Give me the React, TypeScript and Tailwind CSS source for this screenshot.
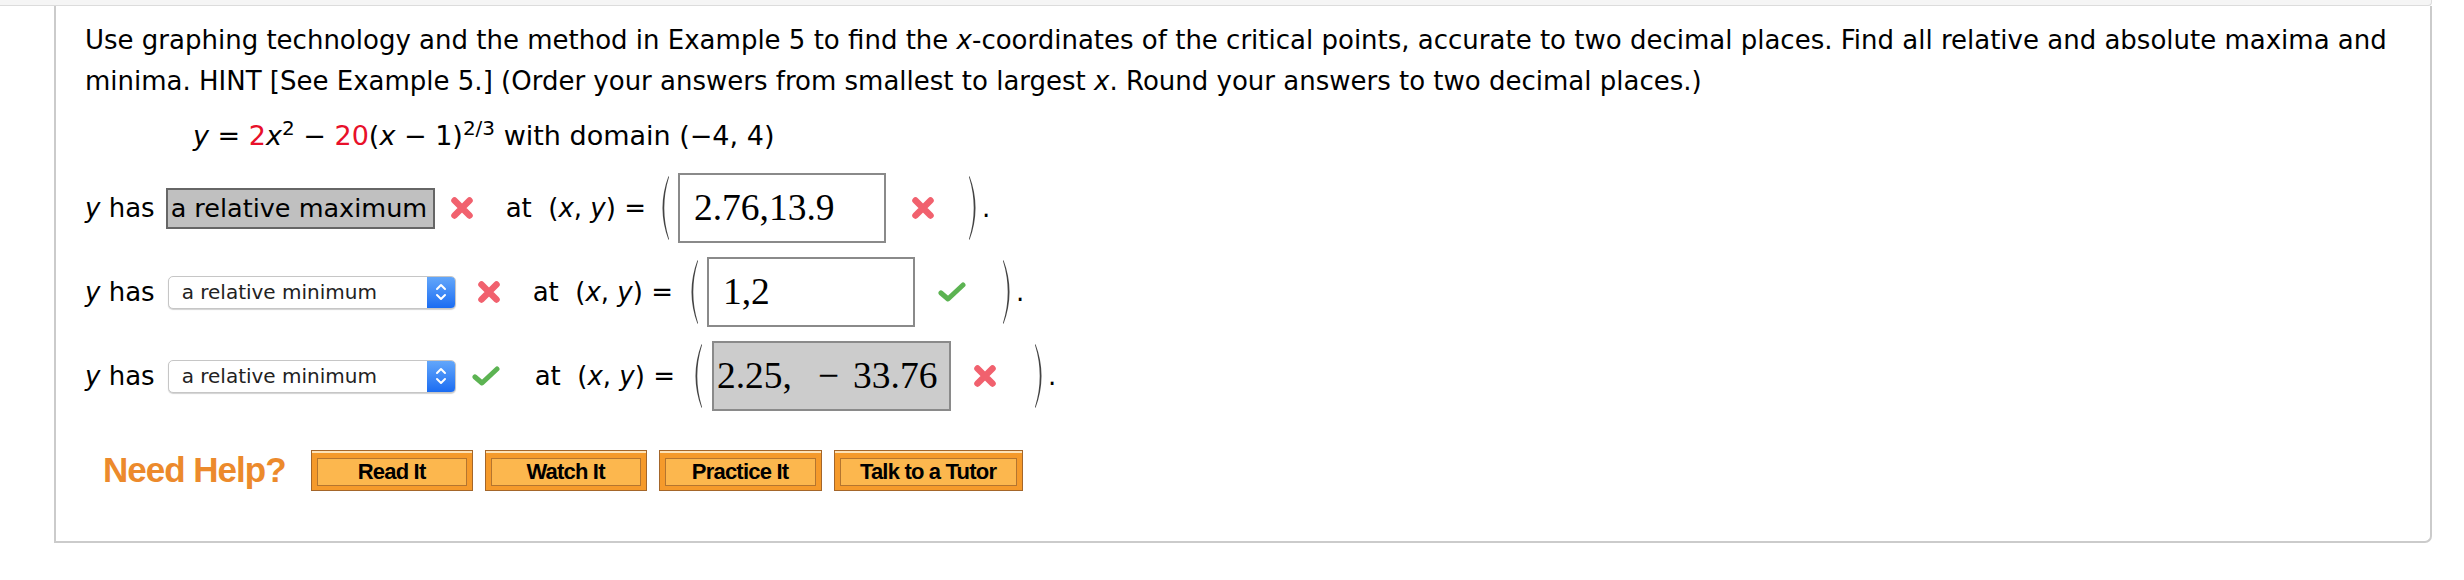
import React from "react";

const body = "font-['DejaVu_Sans',Verdana,sans-serif]";
const serif = "font-['Liberation_Serif','Times_New_Roman',serif]";

const Cross = ({ className = "" }: { className?: string }) => (
  <svg width="24" height="24" viewBox="0 0 24 24" className={`shrink-0 ${className}`}>
    <path d="M4.5 4.5 L19.5 19.5 M19.5 4.5 L4.5 19.5" stroke="#f0505f" strokeWidth="6.5" strokeLinecap="round" opacity="0.9" />
  </svg>
);

const Check = ({ className = "" }: { className?: string }) => (
  <svg width="28" height="20" viewBox="0 0 28 20" className={`shrink-0 ${className}`}>
    <path d="M3 11 L10 17 L25 3" fill="none" stroke="#5cb352" strokeWidth="5" strokeLinecap="round" strokeLinejoin="round" />
  </svg>
);

const Paren = ({ right, className = "" }: { right?: boolean; className?: string }) => (
  <svg width="14" height="66" viewBox="0 0 14 66" className={`shrink-0 ${className}`}>
    <g transform={right ? "translate(14,0) scale(-1,1)" : undefined}>
      <path d="M12.5 1 Q0.5 33 12.5 65 L13 64 Q3.5 33 13 2 Z" fill="#444" />
    </g>
  </svg>
);

const Select = () => (
  <div className="ml-[13px] w-[288px] h-[33px] flex rounded-[5px] border border-[#c6c6c6] bg-white shadow-[0_1px_1px_rgba(0,0,0,0.18)] overflow-hidden shrink-0">
    <div className={`flex-1 pl-[13px] flex items-center text-[20px] text-[#222] ${body}`}>a relative minimum</div>
    <div className="w-[28px] bg-linear-to-b from-[#62a6fa] to-[#1a6cf2] flex items-center justify-center">
      <svg width="14" height="22" viewBox="0 0 14 22">
        <path d="M3 8 L7 4 L11 8 M3 14 L7 18 L11 14" fill="none" stroke="white" strokeWidth="2" strokeLinecap="round" strokeLinejoin="round" />
      </svg>
    </div>
  </div>
);

const AtXY = ({ className = "" }: { className?: string }) => (
  <span className={`whitespace-pre ${className}`}>
    at  (<i>x</i>, <i>y</i>) =
  </span>
);

const Answer = ({ children, className = "", gray }: { children: React.ReactNode; className?: string; gray?: boolean }) => (
  <div
    className={`h-[70px] border-2 border-[#8a8a8a] flex items-center text-[37.5px] text-black shrink-0 ${serif} ${gray ? "bg-[#cccccc]" : "bg-white"} ${className}`}
  >
    {children}
  </div>
);

const HelpButton = ({ label, w }: { label: string; w: string }) => (
  <div className={`${w} h-[41px] border border-[#a4662a] bg-[#f59a2b] shadow-[inset_0_2px_0_#fde2b6] px-[5px] pt-[7px] pb-[4px] shrink-0`}>
    <div className="h-full border border-[#b4752f] bg-[#fcb74e] flex items-center justify-center text-[22px] font-bold text-black font-['Liberation_Sans',Arial,sans-serif] tracking-[-0.8px]">
      {label}
    </div>
  </div>
);

export default function App() {
  return (
    <div className={`w-[2464px] h-[580px] bg-white text-black ${body} text-[26px] overflow-hidden`}>
      <div className="w-[2432px] h-[6px] bg-[#f5f5f5] border-b border-r border-[#dcdcdc] rounded-br-[4px]" />
      <div className="ml-[54px] w-[2378px] h-[537px] border-2 border-t-0 border-[#cbcbcb] rounded-br-[7px] pl-[29px] pr-[4px] pt-[14px]">
        <p className="leading-[41px]">
          Use graphing technology and the method in Example 5 to find the <i>x</i>-coordinates of the critical points, accurate to two decimal places. Find all relative and absolute maxima and minima. HINT [See Example 5.] (Order your answers from smallest to largest <i>x</i>. Round your answers to two decimal places.)
        </p>

        <div className="mt-[14px] pl-[108px] leading-[40px] text-[27px]">
          <i>y</i> = <span className="text-[#e8102a]">2</span>
          <i>x</i>
          <sup className="text-[20px]">2</sup> − <span className="text-[#e8102a]">20</span>(<i>x</i> − 1)
          <sup className="text-[20px]">2/3</sup> with domain (−4, 4)
        </div>

        <div className="mt-[17px] flex items-center h-[70px]">
          <span>
            <i>y</i> has
          </span>
          <div className="ml-[11px] w-[269px] h-[41px] border-2 border-[#666] bg-[#c0c0c0] flex items-center pl-[3px] text-[25.5px] whitespace-nowrap overflow-hidden shrink-0">
            a relative maximum
          </div>
          <Cross className="ml-[15px]" />
          <AtXY className="ml-[32px]" />
          <Paren className="ml-[10px]" />
          <Answer className="ml-[8px] w-[208px] pl-[14px]">2.76,13.9</Answer>
          <Cross className="ml-[25px]" />
          <Paren right className="ml-[33px]" />
          <span>.</span>
        </div>

        <div className="mt-[14px] flex items-center h-[70px]">
          <span>
            <i>y</i> has
          </span>
          <Select />
          <Cross className="ml-[21px]" />
          <AtXY className="ml-[32px]" />
          <Paren className="ml-[12px]" />
          <Answer className="ml-[8px] w-[208px] pl-[14px]">1,2</Answer>
          <Check className="ml-[23px]" />
          <Paren right className="ml-[36px]" />
          <span>.</span>
        </div>

        <div className="mt-[14px] flex items-center h-[70px]">
          <span>
            <i>y</i> has
          </span>
          <Select />
          <Check className="ml-[16px]" />
          <AtXY className="ml-[35px]" />
          <Paren className="ml-[14px]" />
          <Answer gray className="ml-[9px] w-[239px] pl-[3px]">
            <span>2.25,</span>
            <span className="ml-[26px]">−</span>
            <span className="ml-[14px]">33.76</span>
          </Answer>
          <Cross className="ml-[22px]" />
          <Paren right className="ml-[37px]" />
          <span>.</span>
        </div>

        <div className="mt-[33px] ml-[18px] flex items-center gap-[12px]">
          <span className="text-[35px] font-bold text-[#ec8a2c] font-['Liberation_Sans',Arial,sans-serif] tracking-[-1px] mr-[13px]">
            Need Help?
          </span>
          <HelpButton label="Read It" w="w-[162px]" />
          <HelpButton label="Watch It" w="w-[162px]" />
          <HelpButton label="Practice It" w="w-[163px]" />
          <HelpButton label="Talk to a Tutor" w="w-[189px]" />
        </div>
      </div>
    </div>
  );
}
